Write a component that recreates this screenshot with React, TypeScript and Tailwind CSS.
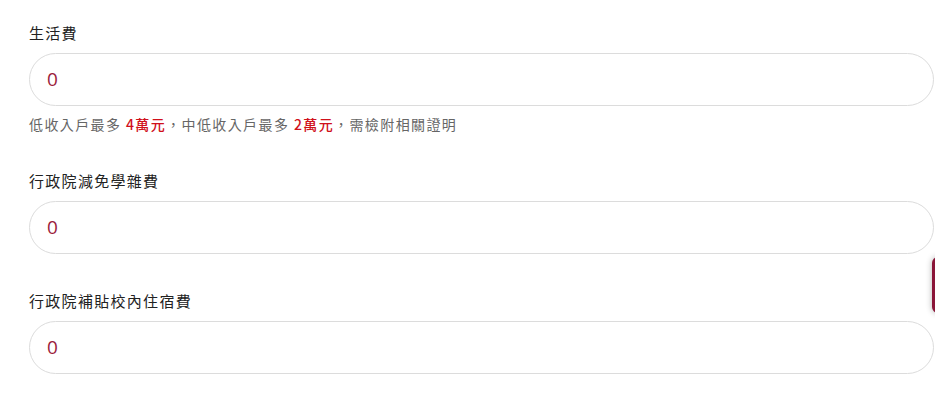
import React from "react";

const font = { fontFamily: '"Noto Sans CJK TC", "Noto Sans", sans-serif' };

function Field({ label, helper }: { label: string; helper?: React.ReactNode }) {
  return (
    <div className="flex flex-col">
      <div className="text-[15px] leading-[22px] tracking-[1.3px] text-[#222]">{label}</div>
      <div className="mt-[9px] h-[53px] w-[905px] rounded-full border border-[#dcdcdc] bg-white flex items-center pl-[17px]">
        <span className="text-[19px] text-[#9b1c3c]" style={{ fontFamily: '"Open Sans", "Noto Sans", sans-serif' }}>0</span>
      </div>
      {helper}
    </div>
  );
}

export default function App() {
  return (
    <div className="relative w-[935px] h-[413px] overflow-hidden bg-white" style={font}>
      <div className="flex flex-col pl-[29px] pt-[22px]">
        <Field
          label="生活費"
          helper={
            <div className="mt-[8px] text-[14px] leading-[20px] tracking-[1.4px] text-[#666]">
              低收入戶最多 <span className="text-[#d0101b] font-medium">4萬元</span>，中低收入戶最多 <span className="text-[#d0101b] font-medium">2萬元</span>，需檢附相關證明
            </div>
          }
        />
        <div className="h-[36px]" />
        <Field label="行政院減免學雜費" />
        <div className="h-[36px]" />
        <Field label="行政院補貼校內住宿費" />
      </div>
      <div className="absolute left-[932px] top-[257px] h-[56px] w-[20px] rounded-l-md bg-[#8a1538] shadow-[0_0_6px_rgba(0,0,0,0.3)]" />
    </div>
  );
}
